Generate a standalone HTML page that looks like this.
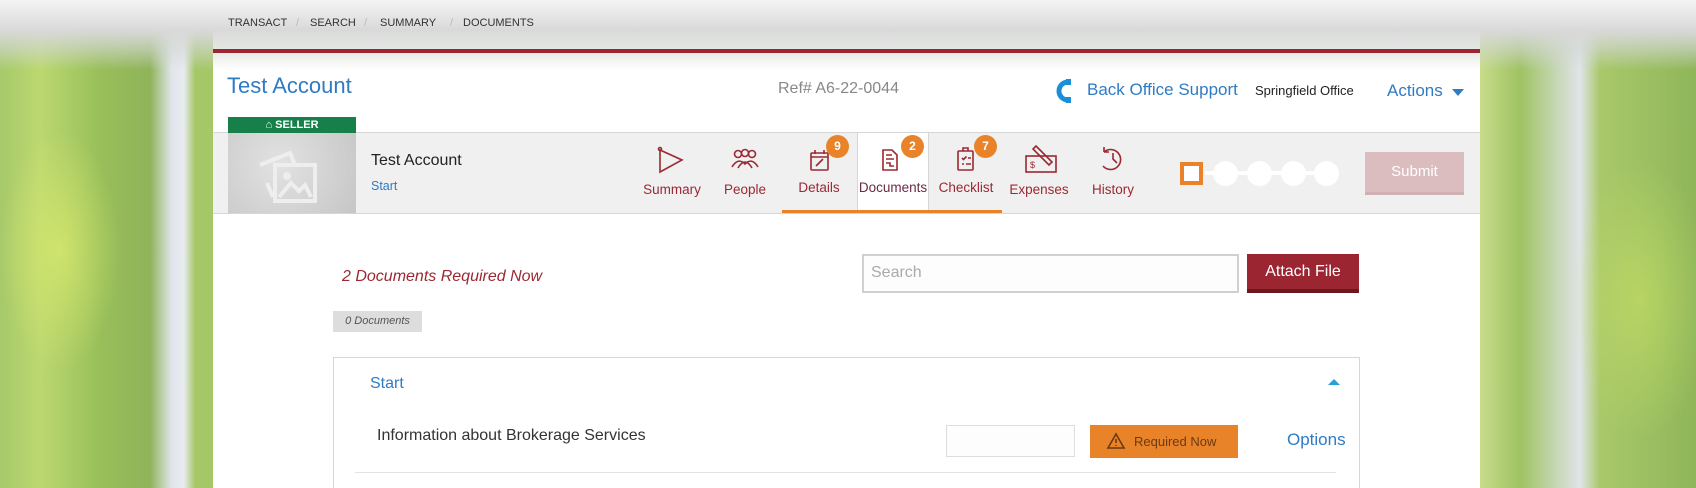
<!DOCTYPE html>
<html><head><meta charset="utf-8"><style>
*{margin:0;padding:0;box-sizing:border-box}
html,body{width:1696px;height:488px;overflow:hidden}
body{position:relative;font-family:"Liberation Sans",sans-serif;background:#9cbf5a}
.a{position:absolute}
.bg{position:absolute;top:0;left:0;width:1696px;height:488px;
background:
linear-gradient(180deg,#f4f4f4 0,#d9d9d9 30px,rgba(210,215,210,0.6) 50px,rgba(0,0,0,0) 70px),
radial-gradient(ellipse 60px 120px at 60px 250px,rgba(220,235,110,0.7),rgba(0,0,0,0)),
radial-gradient(ellipse 70px 140px at 1640px 300px,rgba(200,225,100,0.6),rgba(0,0,0,0)),
linear-gradient(90deg,#a7c96a 0,#bcd870 40px,#98bf5a 100px,#8fb35a 150px,#e2e6ec 172px,#e8ebf0 184px,#a6c766 195px,#a6c766 213px,#fff 213px,#fff 1480px,#c8dc8a 1480px,#9fc262 1520px,#e0e4ea 1580px,#a9c86a 1600px,#8fb65a 1696px)}
.crumb{font-size:11px;color:#333;top:17px}
.t{color:#9b2832;font-size:13.5px;text-align:center;width:80px;top:182px}
.badge{width:23px;height:23px;border-radius:50%;background:#e8832a;color:#fff;font-weight:bold;font-size:12px;text-align:center;line-height:23px}
.dot{width:25px;height:25px;border-radius:50%;background:#fff;top:161px}
</style></head><body>
<div class="bg"></div>
<div class="a crumb" style="left:228px">TRANSACT</div>
<div class="a crumb" style="left:296px;color:#bbb">/</div>
<div class="a crumb" style="left:310px">SEARCH</div>
<div class="a crumb" style="left:364px;color:#bbb">/</div>
<div class="a crumb" style="left:380px">SUMMARY</div>
<div class="a crumb" style="left:450px;color:#bbb">/</div>
<div class="a crumb" style="left:463px">DOCUMENTS</div>

<div class="a" style="left:213px;top:49px;width:1267px;height:4px;background:#9b2530"></div>
<div class="a" style="left:227px;top:73px;font-size:22px;color:#2f7bc4">Test Account</div>
<div class="a" style="left:778px;top:80px;font-size:16px;color:#888">Ref# A6-22-0044</div>
<svg class="a" style="left:1053px;top:79px" width="20" height="24" viewBox="0 0 20 24"><path d="M15 3 A9 9 0 1 0 15 21" fill="none" stroke="#1a8fd8" stroke-width="5"/><rect x="13" y="0" width="5" height="6" fill="#1a8fd8"/><rect x="13" y="18" width="5" height="6" fill="#1a8fd8"/></svg>
<div class="a" style="left:1087px;top:80px;font-size:17px;color:#2f7bc4">Back Office Support</div>
<div class="a" style="left:1255px;top:83px;font-size:13px;color:#222">Springfield Office</div>
<div class="a" style="left:1387px;top:81px;font-size:17px;color:#2f7bc4">Actions</div>
<div class="a" style="left:1452px;top:89px;border-left:6px solid transparent;border-right:6px solid transparent;border-top:7px solid #2f7bc4"></div>

<div class="a" style="left:213px;top:132px;width:1267px;height:82px;background:#f0f0f0;border-top:1px solid #d6d6d6;border-bottom:1px solid #d6d6d6"></div>
<div class="a" style="left:228px;top:117px;width:128px;height:16px;background:#17804a;color:#fff;font-size:11px;font-weight:bold;text-align:center;line-height:16px">&#8962; SELLER</div>
<div class="a" style="left:228px;top:133px;width:128px;height:80px;background:radial-gradient(circle at 40% 40%,#e2e2e2,#c6c6c6)"></div>
<svg class="a" style="left:255px;top:145px" width="70" height="60" viewBox="0 0 70 60"><g fill="none" stroke="#eee" stroke-width="4"><path d="M5 20 L35 8 L40 20"/><path d="M12 38 L18 52"/><rect x="20" y="20" width="40" height="36"/><path d="M24 52 L36 38 L44 46 L50 40 L56 52"/></g><circle cx="32" cy="31" r="4" fill="#eee"/></svg>
<div class="a" style="left:371px;top:152px;font-size:16px;color:#222">Test Account</div>
<div class="a" style="left:371px;top:179px;font-size:12.5px;color:#2f7bc4">Start</div>

<div class="a" style="left:857px;top:133px;width:72px;height:80px;background:#fff;border-left:1px solid #d6d6d6;border-right:1px solid #d6d6d6"></div>
<div class="a" style="left:782px;top:210px;width:220px;height:3px;background:#e8832a"></div>

<svg class="a" style="left:0;top:0" width="1200" height="200"><g fill="none" stroke="#9b2832" stroke-width="1.6">
<path d="M660 172 V150 L682 160 Z"/><circle cx="660" cy="149" r="1.5"/>
<circle cx="738" cy="154" r="3.5"/><circle cx="745" cy="153" r="3.5"/><circle cx="752" cy="154" r="3.5"/><path d="M732 167 q6-10 13-3 q7-7 13 3 M738 168 q7-12 14 0"/>
<rect x="811" y="153" width="17" height="17" rx="1"/><path d="M811 157 H828 M815 150 V154 M824 150 V154 M816 166 L823 159"/>
<path d="M883 150 H892 L897 155 V170 H883 Z M886 155 H892 M886 159 H894 M886 163 H890 V166 H894"/>
<rect x="958" y="151" width="15" height="19" rx="1"/><path d="M963 151 V148 H968 V151 M962 158 l1.5 1.5 3-3 M968 158 H971 M962 164 H964 M966 164 H971"/>
<rect x="1026" y="156" width="30" height="16"/><path d="M1036 146 L1052 162 L1049 165 L1033 149 Z"/>
<path d="M1104 152 A10 10 0 1 1 1103 166 M1104 152 L1104 147 M1104 152 L1109 152 M1113 153 V159 L1117 163"/>
</g><text x="1030" y="168" font-size="9" fill="#9b2832" font-family="Liberation Sans">$</text></svg>
<div class="a t" style="left:632px">Summary</div>
<div class="a t" style="left:705px">People</div>
<div class="a t" style="left:779px;top:180px">Details</div>
<div class="a t" style="left:853px;top:180px;color:#6b2a45">Documents</div>
<div class="a t" style="left:926px;top:180px">Checklist</div>
<div class="a t" style="left:999px">Expenses</div>
<div class="a t" style="left:1073px">History</div>
<div class="a badge" style="left:826px;top:135px">9</div>
<div class="a badge" style="left:901px;top:135px">2</div>
<div class="a badge" style="left:974px;top:135px">7</div>

<div class="a" style="left:1205px;top:171px;width:130px;height:4px;background:#fff"></div>
<div class="a" style="left:1180px;top:162px;width:23px;height:23px;border:4px solid #e8832a;background:#fff"></div>
<div class="a dot" style="left:1213px"></div><div class="a dot" style="left:1247px"></div><div class="a dot" style="left:1281px"></div><div class="a dot" style="left:1314px"></div>
<div class="a" style="left:1365px;top:152px;width:99px;height:43px;background:#dbbcbf;border-bottom:3px solid #cfb0b3;color:#fff;font-size:15px;text-align:center;line-height:40px">Submit</div>

<div class="a" style="left:342px;top:268px;font-size:16px;font-style:italic;color:#9b2832">2 Documents Required Now</div>
<div class="a" style="left:862px;top:254px;width:377px;height:39px;border:2px solid #d0d0d0;background:#fdfdfd;color:#aaa;font-size:16px;padding:8px 7px">Search</div>
<div class="a" style="left:1247px;top:254px;width:112px;height:39px;background:#9b2530;border-bottom:4px solid #6a1820;color:#fff;font-size:16px;text-align:center;line-height:36px">Attach File</div>
<div class="a" style="left:333px;top:311px;width:89px;height:21px;background:#ddd;color:#555;font-size:11px;font-style:italic;text-align:center;line-height:21px">0 Documents</div>

<div class="a" style="left:333px;top:357px;width:1027px;height:140px;border:1px solid #d6d6d6;background:#fff"></div>
<div class="a" style="left:370px;top:375px;font-size:16px;color:#2f7bc4">Start</div>
<div class="a" style="left:1328px;top:379px;border-left:6px solid transparent;border-right:6px solid transparent;border-bottom:6px solid #2aa0d8"></div>
<div class="a" style="left:377px;top:427px;font-size:16px;color:#333">Information about Brokerage Services</div>
<div class="a" style="left:946px;top:425px;width:129px;height:32px;border:1px solid #ddd;background:#fdfdfd"></div>
<div class="a" style="left:1090px;top:425px;width:148px;height:33px;background:#e8832a;color:#6b3a10;font-size:13px;line-height:33px;padding-left:44px">Required Now</div>
<svg class="a" style="left:1106px;top:432px" width="20" height="18"><path d="M10 2 L18 16 H2 Z M10 7 V11 M10 13 V14" fill="none" stroke="#6b3a10" stroke-width="1.6"/></svg>
<div class="a" style="left:1287px;top:430px;font-size:17px;color:#2f7bc4">Options</div>
<div class="a" style="left:355px;top:472px;width:981px;height:1px;background:#e2e2e2"></div>
</body></html>
